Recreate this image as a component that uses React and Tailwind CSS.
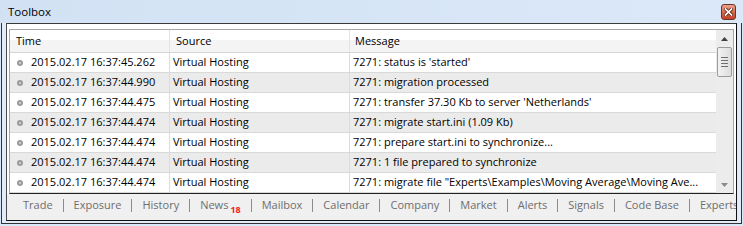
import React from "react";

const rows = [
  { time: "2015.02.17 16:37:45.262", msg: "7271: status is 'started'" },
  { time: "2015.02.17 16:37:44.990", msg: "7271: migration processed" },
  { time: "2015.02.17 16:37:44.475", msg: "7271: transfer 37.30 Kb to server 'Netherlands'" },
  { time: "2015.02.17 16:37:44.474", msg: "7271: migrate start.ini (1.09 Kb)" },
  { time: "2015.02.17 16:37:44.474", msg: "7271: prepare start.ini to synchronize..." },
  { time: "2015.02.17 16:37:44.474", msg: "7271: 1 file prepared to synchronize" },
  {
    time: "2015.02.17 16:37:44.474",
    msg: '7271: migrate file "Experts\\Examples\\Moving Average\\Moving Ave...',
  },
];

const tabs = [
  "Trade",
  "Exposure",
  "History",
  "News",
  "Mailbox",
  "Calendar",
  "Company",
  "Market",
  "Alerts",
  "Signals",
  "Code Base",
  "Experts",
];

function CloseButton() {
  return (
    <div className="w-[15px] h-[16px] rounded-[3px] border border-[#6e3426] bg-gradient-to-b from-[#eba38f] via-[#d7684c] to-[#c1432a] flex items-center justify-center">
      <svg width="9" height="8" viewBox="0 0 9 8">
        <path d="M1.5 1 L7.5 7 M7.5 1 L1.5 7" stroke="#5a2418" strokeWidth="3.2" strokeLinecap="square" />
        <path d="M1.5 1 L7.5 7 M7.5 1 L1.5 7" stroke="#ffffff" strokeWidth="1.7" strokeLinecap="square" />
      </svg>
    </div>
  );
}

function Bullet() {
  return (
    <div className="w-[6px] h-[6px] rounded-full bg-[#9a9a9a] flex items-center justify-center">
      <div className="w-[2px] h-[2px] rounded-full bg-[#d8d8d8]" />
    </div>
  );
}

function Scrollbar() {
  return (
    <div className="w-[17px] bg-[#ececec] flex flex-col items-center">
      <div className="h-[17px] w-full flex items-center justify-center">
        <svg width="7" height="4" viewBox="0 0 7 4">
          <path d="M0 4 L3.5 0 L7 4 Z" fill="#404040" />
        </svg>
      </div>
      <div className="h-[30px] w-[15px] rounded-[2px] border border-[#9b9b9b] bg-gradient-to-r from-[#f3f3f3] to-[#dcdcdc] flex flex-col items-center justify-center gap-[2px]">
        <div className="w-[7px] h-[1px] bg-[#6f6f6f]" />
        <div className="w-[7px] h-[1px] bg-[#6f6f6f]" />
        <div className="w-[7px] h-[1px] bg-[#6f6f6f]" />
        <div className="w-[7px] h-[1px] bg-[#6f6f6f]" />
      </div>
      <div className="flex-1" />
      <div className="h-[17px] w-full flex items-center justify-center">
        <svg width="7" height="4" viewBox="0 0 7 4">
          <path d="M0 0 L3.5 4 L7 0 Z" fill="#8a8a8a" />
        </svg>
      </div>
    </div>
  );
}

export default function App() {
  return (
    <div className="w-[743px] h-[226px] overflow-hidden flex flex-col bg-[#d9e7f6] text-[11px] text-black font-['Open_Sans','Noto_Sans',sans-serif]">
      {/* title bar */}
      <div className="h-[23px] flex items-center justify-between pl-[8px] pr-[7px] pt-[1px] bg-gradient-to-r from-[#d2e2f4] to-[#dbe8f8]">
        <span className="text-[11.5px] leading-none">Toolbox</span>
        <CloseButton />
      </div>

      {/* frame */}
      <div className="flex-1 mx-[1px] mb-[2px] border-x border-b border-[#333] bg-[#e2ecf8] px-[4px] pb-[2px] flex flex-col">
        <div className="flex-1 border border-t-[#3a3a3a] border-l-[#4a4a4a] border-r-[#111] border-b-[#111] flex flex-col bg-[#f0f0f0]">
          <div className="bg-white pt-[5px] px-[2px]">
            <div className="border border-[#a6a6a6] border-b-[#222] flex">
              <div className="w-[706px] flex flex-col">
                {/* header */}
                <div className="h-[23px] flex border-b border-[#d5d5d5] bg-[linear-gradient(#ffffff_45%,#f4f4f4_45%)]">
                  <div className="w-[160px] border-r border-[#e3e3e3] pl-[6px] flex items-center">Time</div>
                  <div className="w-[180px] border-r border-[#e3e3e3] pl-[6px] flex items-center">Source</div>
                  <div className="flex-1 pl-[5px] flex items-center">Message</div>
                </div>
                {rows.map((r, i) => (
                  <div
                    key={i}
                    className={
                      "h-[20px] flex border-b border-[#d9d9d9] " +
                      (i % 2 ? "bg-[#ebebeb]" : "bg-white")
                    }
                  >
                    <div className="w-[160px] border-r border-[#dcdcdc] pl-[7px] flex items-center gap-[8px]">
                      <Bullet />
                      <span>{r.time}</span>
                    </div>
                    <div className="w-[180px] border-r border-[#dcdcdc] pl-[3px] flex items-center">
                      Virtual Hosting
                    </div>
                    <div className="flex-1 pl-[3px] flex items-center whitespace-nowrap overflow-hidden">
                      {r.msg}
                    </div>
                  </div>
                ))}
              </div>
              <Scrollbar />
            </div>
          </div>

          {/* tabs */}
          <div className="flex-1 flex items-center pl-[6px] pb-[3px] text-[#6e6e6e] whitespace-nowrap overflow-hidden">
            {tabs.map((t, i) => (
              <div key={t} className="flex items-center">
                {i > 0 && <div className="w-[1px] h-[13px] bg-[#8c8c8c]" />}
                <span className="px-[10px] flex items-center">
                  {t}
                  {t === "News" && (
                    <span className="ml-[2px] text-[9px] font-bold text-[#ff1a1a] relative top-[4px]">18</span>
                  )}
                </span>
              </div>
            ))}
          </div>
        </div>
      </div>
    </div>
  );
}
